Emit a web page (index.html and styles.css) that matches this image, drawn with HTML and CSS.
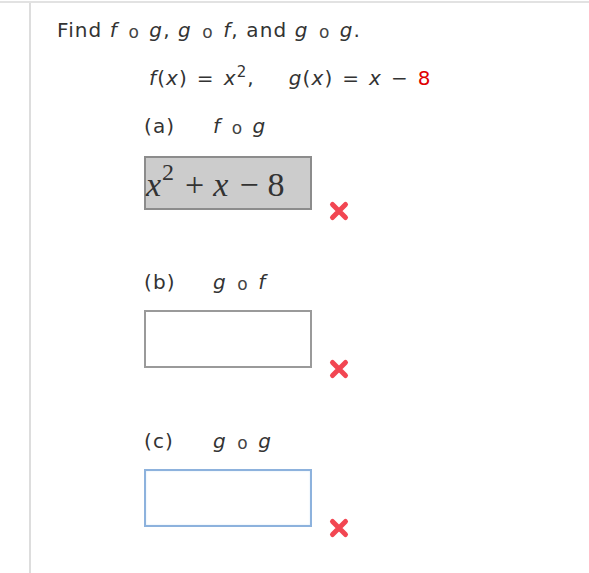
FILE: index.html
```html
<!DOCTYPE html>
<html>
<head>
<meta charset="utf-8">
<link rel="stylesheet" href="styles.css">
</head>
<body>
<div class="frame">
  <div class="panel">
    <p class="title">Find <i>f</i> <span class="o">o</span> <i>g</i>, <i>g</i> <span class="o">o</span> <i>f</i>, and <i>g</i> <span class="o">o</span> <i>g</i>.</p>
    <p class="eq"><i>f</i>(<i>x</i>) = <i>x</i><sup>2</sup>,<span class="sp"></span><i>g</i>(<i>x</i>) = <i>x</i> &minus; <span class="red">8</span></p>

    <p class="label lab-a"><span class="tag">(a)</span><i>f</i> <span class="o">o</span> <i>g</i></p>
    <div class="answer ans-a">
      <div class="box filled"><span class="mi">x</span><sup class="msup">2</sup><span class="mo">+</span><span class="mi">x</span><span class="mo">&minus;</span><span class="mn">8</span></div>
      <svg class="wrong" width="24" height="24" viewBox="0 0 24 24"><path d="M5.5 5.5 L18.5 18.5 M18.5 5.5 L5.5 18.5" stroke="#f24652" stroke-width="5" stroke-linecap="round" fill="none"/></svg>
    </div>

    <p class="label lab-b"><span class="tag">(b)</span><i>g</i> <span class="o">o</span> <i>f</i></p>
    <div class="answer">
      <div class="box empty"></div>
      <svg class="wrong" width="24" height="24" viewBox="0 0 24 24"><path d="M5.5 5.5 L18.5 18.5 M18.5 5.5 L5.5 18.5" stroke="#f24652" stroke-width="5" stroke-linecap="round" fill="none"/></svg>
    </div>

    <p class="label lab-c"><span class="tag">(c)</span><i>g</i> <span class="o">o</span> <i>g</i></p>
    <div class="answer">
      <div class="box focus"></div>
      <svg class="wrong" width="24" height="24" viewBox="0 0 24 24"><path d="M5.5 5.5 L18.5 18.5 M18.5 5.5 L5.5 18.5" stroke="#f24652" stroke-width="5" stroke-linecap="round" fill="none"/></svg>
    </div>
  </div>
</div>
</body>
</html>
```

FILE: styles.css
```css
html, body {
  margin: 0;
  padding: 0;
  background: #ffffff;
}
body {
  font-family: "DejaVu Sans", Verdana, sans-serif;
  color: #333333;
  font-size: 20px;
  letter-spacing: 1.1px;
}
.frame {
  margin-top: 1px;
  border-top: 2px solid #e2e2e2;
  height: 570px;
}
.panel {
  margin-left: 29px;
  border-left: 2px solid #dddddd;
  padding-left: 26px;
  height: 570px;
  padding-top: 15px;
  box-sizing: border-box;
}
p {
  margin: 0;
  line-height: 24px;
}
i {
  font-style: italic;
}
.o {
  font-size: 0.85em;
  line-height: 0;
  letter-spacing: 0;
  margin: 0 3px;
  position: relative;
  top: 1px;
  color: #444444;
}
.eq {
  margin-left: 92px;
  margin-top: 24px;
  word-spacing: 1.5px;
}
.eq sup {
  font-size: 0.75em;
  line-height: 0;
  vertical-align: 0.55em;
}
.sp {
  display: inline-block;
  width: 34px;
}
.red {
  color: #e00000;
}
.label {
  margin-left: 87px;
}
.tag {
  display: inline-block;
  width: 69px;
}
.lab-a {
  margin-top: 24px;
}
.lab-b {
  margin-top: 60px;
}
.lab-c {
  margin-top: 61px;
}
.answer {
  display: flex;
  align-items: flex-end;
  margin-left: 87px;
  margin-top: 16px;
}
.ans-a {
  margin-top: 18px;
}
.box {
  width: 168px;
  height: 58px;
  box-sizing: border-box;
}
.filled {
  height: 54px;
  background: #cccccc;
  border: 2px solid #8c8c8c;
  font-family: "Liberation Serif", "DejaVu Serif", serif;
  font-size: 34px;
  letter-spacing: 0;
  color: #333333;
  display: flex;
  align-items: center;
  padding-left: 0;
  padding-top: 4px;
  white-space: nowrap;
}
.mi {
  font-style: italic;
}
.msup {
  font-size: 24px;
  line-height: 0;
  position: relative;
  top: -13px;
  margin-left: 1px;
}
.mo {
  margin: 0 9px 0 11px;
}
.empty {
  border: 2px solid #9a9a9a;
  background: #ffffff;
}
.focus {
  border: 2px solid #8db2dd;
  box-shadow: inset 0 0 2px #d6e6f6;
  background: #ffffff;
}
.wrong {
  margin-left: 15px;
  margin-bottom: -13px;
}
```
